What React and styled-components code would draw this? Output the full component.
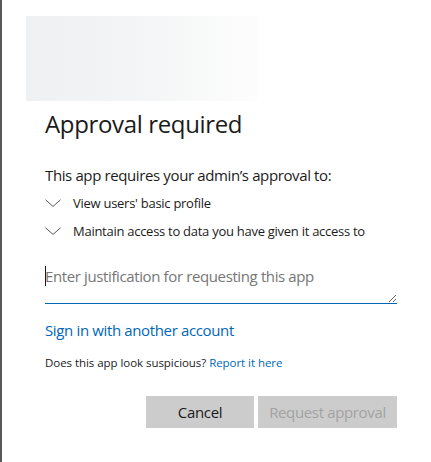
import React from "react";
import styled, { createGlobalStyle } from "styled-components";

const Global = createGlobalStyle`
  html, body { margin: 0; padding: 0; background: #fff; }
  body { font-family: "Open Sans", "Noto Sans", sans-serif; color: #1b1b1b; }
`;

const Page = styled.div`
  box-sizing: border-box;
  height: 462px;
  width: 431px;
  border-left: 2px solid #57585b;
  padding-top: 16px;
  display: flex;
  flex-direction: column;
`;

const Logo = styled.div`
  width: 232px;
  height: 85px;
  margin-left: 24px;
  background: linear-gradient(90deg, #eef0f1 0%, #f3f4f5 45%, #fdfdfd 100%);
`;

const Content = styled.div`
  padding-left: 43px;
  width: 352px;
  display: flex;
  flex-direction: column;
`;

const Title = styled.h1`
  margin: 7px 0 0;
  font-size: 24px;
  line-height: 32px;
  font-weight: 400;
  letter-spacing: -0.35px;
  color: #1b1b1b;
`;

const Intro = styled.p`
  margin: 25px 0 0;
  font-size: 15px;
  line-height: 20px;
  letter-spacing: -0.38px;
  color: #1b1b1b;
`;

const List = styled.ul`
  list-style: none;
  margin: 8px 0 0;
  padding: 0;
  display: flex;
  flex-direction: column;
  gap: 8px;
`;

const Item = styled.li`
  display: flex;
  align-items: center;
  gap: 12px;
  font-size: 13px;
  line-height: 20px;
  letter-spacing: -0.27px;
  color: #1b1b1b;
`;

const Chevron = styled.svg`
  width: 16px;
  height: 8px;
  flex: none;
`;

const Field = styled.div`
  position: relative;
  margin-top: 23px;
`;

const Caret = styled.span`
  position: absolute;
  left: 0;
  top: 2px;
  width: 1px;
  height: 20px;
  background: #1b1b1b;
`;

const Area = styled.textarea`
  display: block;
  box-sizing: border-box;
  width: 352px;
  height: 40px;
  margin: 0;
  padding: 1px 0 0;
  border: none;
  border-bottom: 1px solid #0067b8;
  outline: none;
  font-family: inherit;
  font-size: 15px;
  line-height: 22px;
  letter-spacing: -0.38px;
  background: transparent;
  &::placeholder { color: #767676; opacity: 1; }
`;

const Link = styled.a`
  color: #0067b8;
  text-decoration: none;
`;

const SignIn = styled.div`
  margin-top: 16px;
  font-size: 15px;
  line-height: 20px;
  letter-spacing: -0.36px;
`;

const Small = styled.p`
  margin: 15px 0 0;
  font-size: 11.5px;
  line-height: 16px;
  letter-spacing: -0.05px;
  color: #1b1b1b;
`;

const Actions = styled.div`
  display: flex;
  justify-content: flex-end;
  gap: 4px;
  margin-top: 25px;
`;

const Button = styled.button`
  height: 32px;
  width: ${(p) => p.$w};
  border: none;
  padding: 0;
  background: #cccccc;
  font-family: inherit;
  font-size: 15px;
  letter-spacing: -0.35px;
  color: ${(p) => (p.disabled ? "#a3a3a3" : "#1b1b1b")};
`;

function Down() {
  return (
    <Chevron viewBox="0 0 16 8">
      <polyline points="0.5,0.8 8,7.4 15.5,0.8" fill="none" stroke="#555" strokeWidth="1" />
    </Chevron>
  );
}

export default function App() {
  return (
    <>
      <Global />
      <Page>
        <Logo />
        <Content>
          <Title>Approval required</Title>
          <Intro>This app requires your admin’s approval to:</Intro>
          <List>
            <Item><Down />View users' basic profile</Item>
            <Item><Down />Maintain access to data you have given it access to</Item>
          </List>
          <Field>
            <Caret />
            <Area placeholder="Enter justification for requesting this app" />
          </Field>
          <SignIn><Link href="#">Sign in with another account</Link></SignIn>
          <Small>Does this app look suspicious? <Link href="#">Report it here</Link></Small>
          <Actions>
            <Button $w="108px">Cancel</Button>
            <Button $w="139px" disabled>Request approval</Button>
          </Actions>
        </Content>
      </Page>
    </>
  );
}
